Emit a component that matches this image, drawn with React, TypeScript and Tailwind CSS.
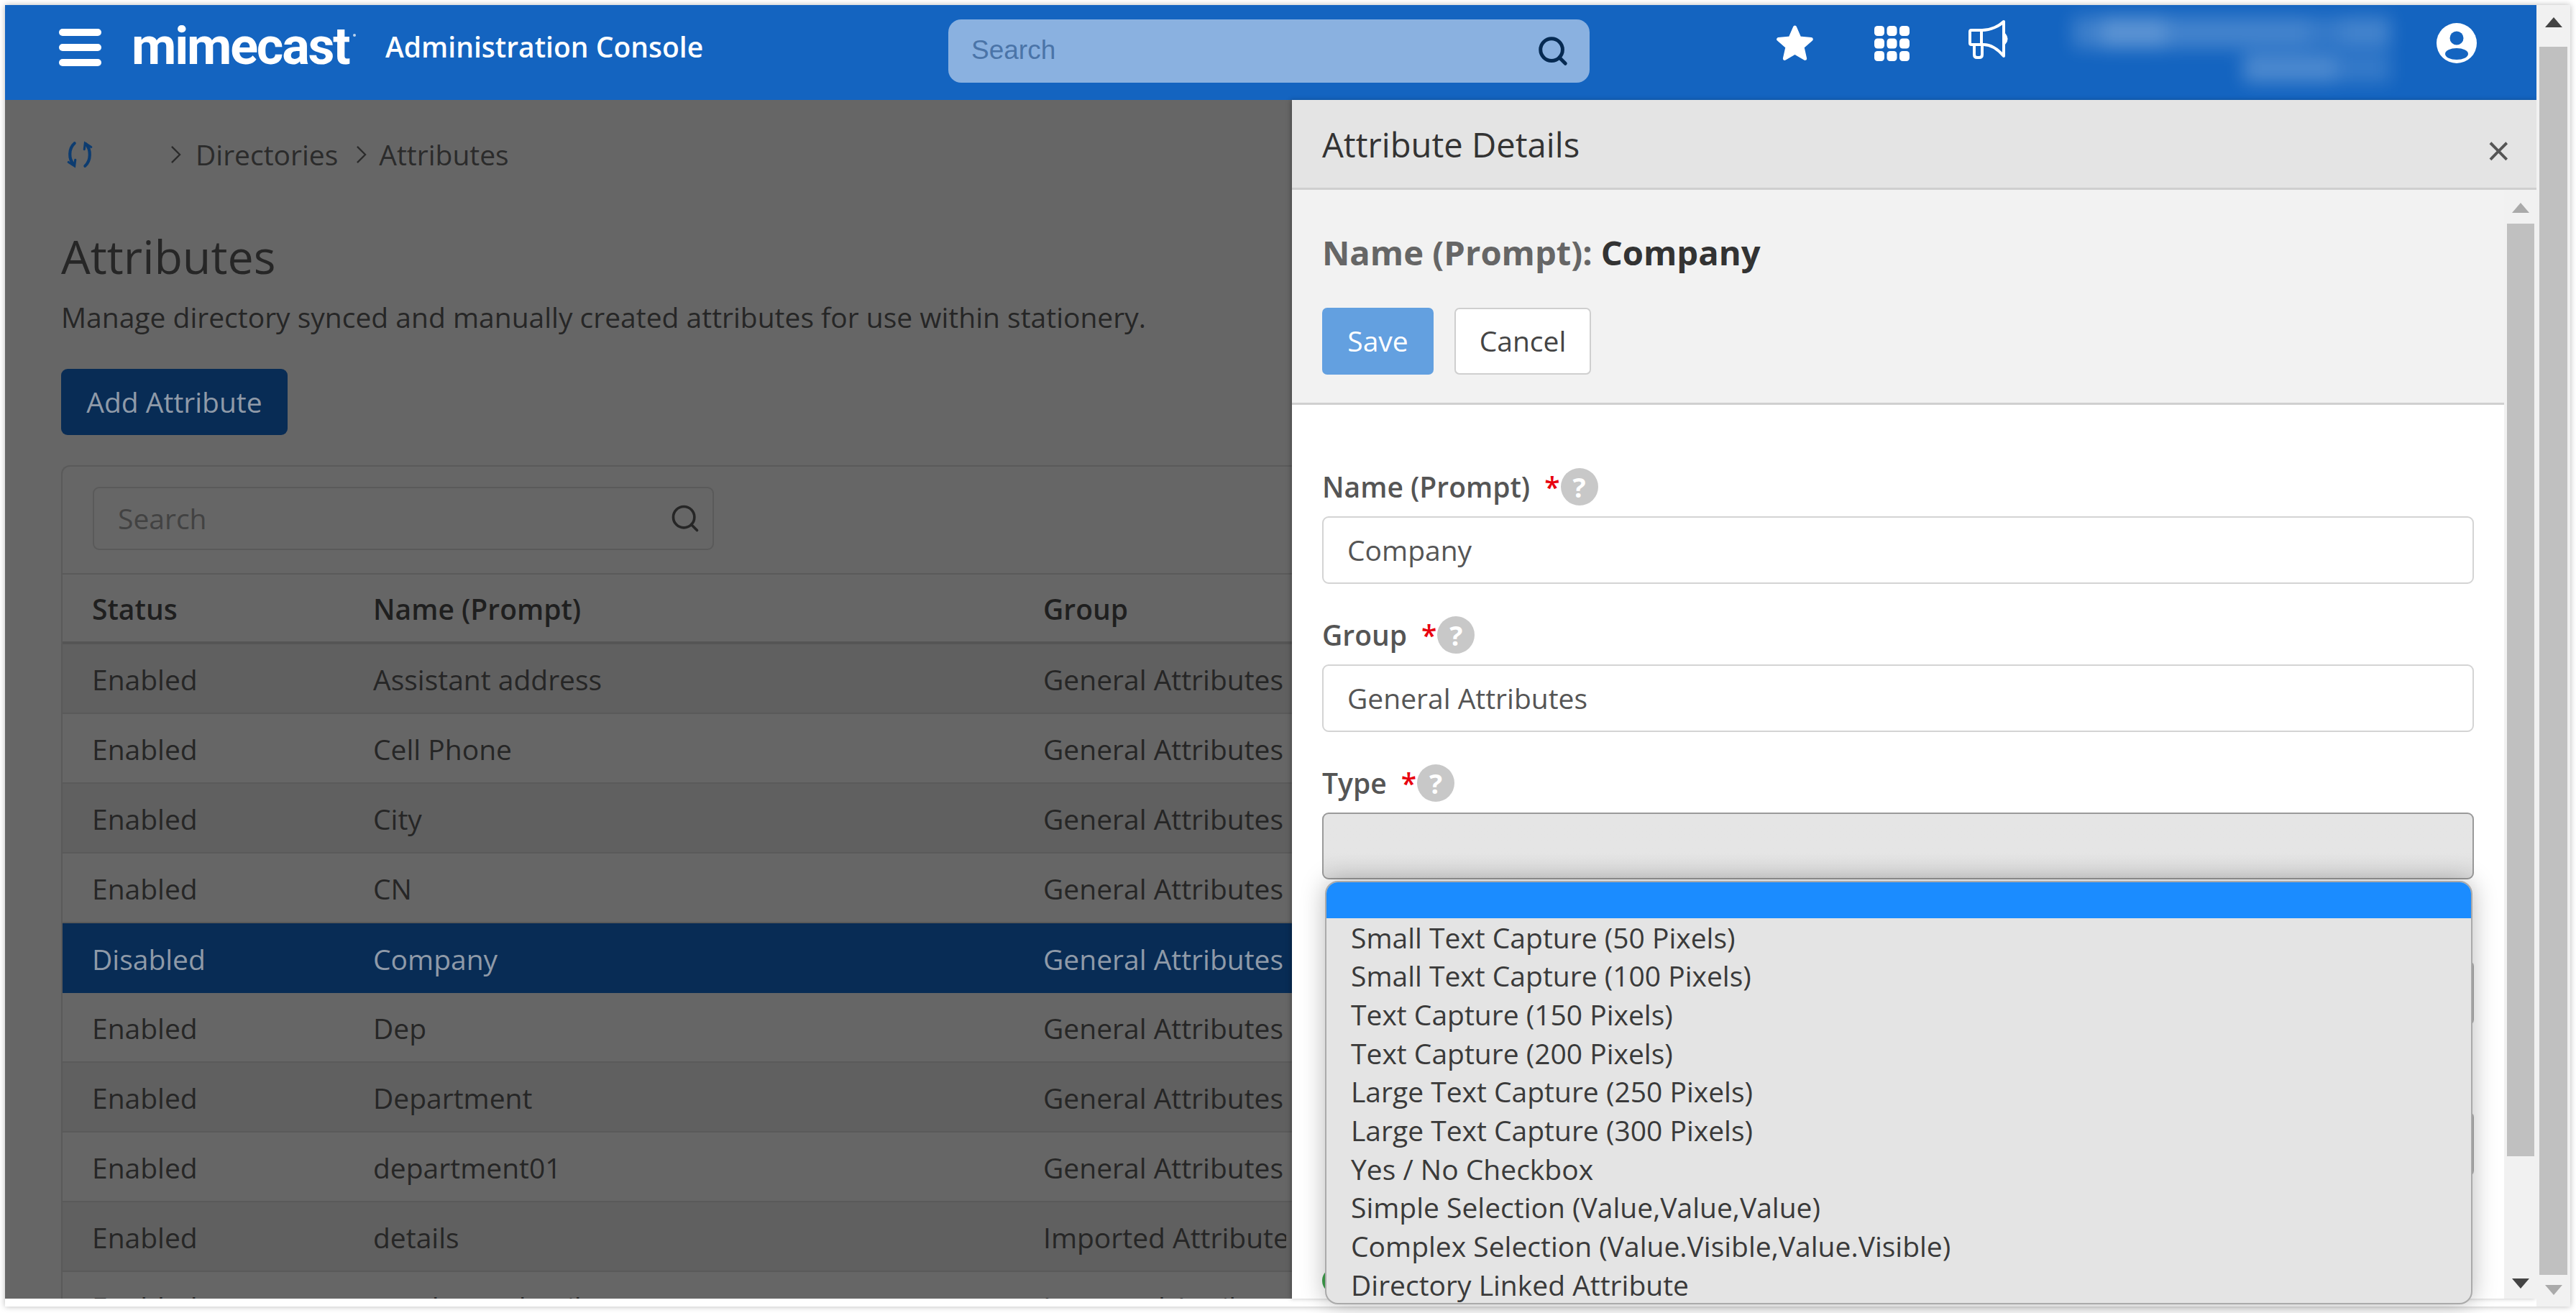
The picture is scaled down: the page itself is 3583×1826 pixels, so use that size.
import { Search } from "lucide-react";

const font = "font-['Open_Sans',sans-serif]";

const rows: [string, string, string, string][] = [
  ["Enabled", "Assistant address", "General Attributes", "bg-[#606060]"],
  ["Enabled", "Cell Phone", "General Attributes", "bg-[#666666]"],
  ["Enabled", "City", "General Attributes", "bg-[#606060]"],
  ["Enabled", "CN", "General Attributes", "bg-[#666666]"],
];
const rowsAfter: [string, string, string, string][] = [
  ["Enabled", "Dep", "General Attributes", "bg-[#666666]"],
  ["Enabled", "Department", "General Attributes", "bg-[#606060]"],
  ["Enabled", "department01", "General Attributes", "bg-[#666666]"],
  ["Enabled", "details", "Imported Attributes", "bg-[#606060]"],
  ["Enabled", "employee details", "Imported Attributes", "bg-[#666666]"],
];

const options = [
  "Small Text Capture (50 Pixels)",
  "Small Text Capture (100 Pixels)",
  "Text Capture (150 Pixels)",
  "Text Capture (200 Pixels)",
  "Large Text Capture (250 Pixels)",
  "Large Text Capture (300 Pixels)",
  "Yes / No Checkbox",
  "Simple Selection (Value,Value,Value)",
  "Complex Selection (Value.Visible,Value.Visible)",
  "Directory Linked Attribute",
];

function Row({ r }: { r: [string, string, string, string] }) {
  return (
    <div className={`flex h-[97px] shrink-0 items-center border-b-2 border-[#5a5a5a] pt-[3px] text-[#262626] ${r[3]}`}>
      <div className="w-[432px] shrink-0 pl-[41px]">{r[0]}</div>
      <div className="w-[932px] shrink-0">{r[1]}</div>
      <div className="w-[338px] shrink-0 overflow-hidden whitespace-nowrap">{r[2]}</div>
    </div>
  );
}

function Help() {
  return (
    <span className="ml-[1px] flex h-[52px] w-[52px] shrink-0 items-center justify-center rounded-full bg-[#c8c8c8] text-[38px] font-bold leading-none text-white">
      ?
    </span>
  );
}

function Field({ label, gap, value, mt }: { label: string; gap: string; value: string; mt: string }) {
  return (
    <div className={mt}>
      <div className="flex h-[50px] items-center text-[#555555] font-semibold">
        <span>{label}</span>
        <span className={`${gap} text-[#e8000f]`}>*</span>
        <Help />
      </div>
      <div className="mt-[16px] flex h-[94px] items-center rounded-[9px] border-2 border-[#d4d4d4] bg-white pl-[33px] text-[#555555]">
        {value}
      </div>
    </div>
  );
}

function Arrow({ up, color }: { up?: boolean; color: string }) {
  return (
    <svg width="24" height="14" viewBox="0 0 24 14" className="shrink-0">
      <polygon points={up ? "12,0 24,14 0,14" : "0,0 24,0 12,14"} fill={color} />
    </svg>
  );
}

export default function App() {
  return (
    <div className={`${font} h-[1826px] w-[3583px] overflow-hidden bg-white pl-[7px] pr-[8px] pt-[7px] text-[39px]`}>
      <div className="relative flex h-[1810px] w-full shadow-[0_0_8px_rgba(0,0,0,0.28)]">
        <div className="flex h-[1799px] w-[3521px] shrink-0 flex-col">
          {/* top bar */}
          <header className="flex h-[132px] shrink-0 items-start bg-[#1464c0] text-white">
            <div className="ml-[75px] mt-[33px] flex h-[52px] w-[59px] shrink-0 flex-col justify-between">
              <span className="h-[10px] rounded-full bg-white" />
              <span className="h-[10px] rounded-full bg-white" />
              <span className="h-[10px] rounded-full bg-white" />
            </div>
            <div className="ml-[42px] mt-[16px] flex w-[353px] shrink-0 items-start font-['Roboto',sans-serif] text-[72px] font-bold leading-[84px] tracking-[-2.2px]">
              mimecast<span className="ml-[6px] mt-[24px] h-[4px] w-[4px] rounded-full bg-white/70" />
            </div>
            <div className="mt-[33px] w-[783px] shrink-0 whitespace-nowrap text-[39px] font-semibold leading-[50px]">Administration Console</div>
            <div className="mt-[20px] flex h-[88px] w-[892px] shrink-0 items-center justify-between rounded-[18px] bg-[#8ab1e0] pl-[32px] pr-[28px] font-['Liberation_Sans',sans-serif] text-[37px] text-[#4a74a8]">
              <span className="mb-[3px]">Search</span>
              <Search size={46} strokeWidth={2.6} className="text-[#062a52]" />
            </div>
            <svg viewBox="0 0 53 50" className="ml-[259px] mt-[28px] h-[50px] w-[53px] shrink-0" fill="#fff" stroke="#fff" strokeWidth="5" strokeLinejoin="round">
              <polygon points="26.5,3 33,18.1 49.3,19.6 37,30.4 40.6,46.4 26.5,38 12.4,46.4 16,30.4 3.7,19.6 20,18.1" />
            </svg>
            <svg viewBox="0 0 49 49" className="ml-[84px] mt-[29px] h-[49px] w-[49px] shrink-0" fill="#fff">
              {[0, 17.5, 35].flatMap((y) => [0, 17.5, 35].map((x) => <rect key={`${x}-${y}`} x={x} y={y} width="14" height="14" rx="4.5" />))}
            </svg>
            <svg viewBox="0 0 56 56" className="ml-[81px] mt-[20px] h-[56px] w-[56px] shrink-0" fill="none" stroke="#fff" strokeWidth="4" strokeLinejoin="round" strokeLinecap="round">
              <path d="M5 15 H20 C32 15 44 9 50 3 V51 C44 44 34 35 22 35 H5 Q3 35 3 33 V17 Q3 15 5 15 Z" />
              <path d="M19 15 V35" />
              <path d="M9 35 V49 Q9 53 13 53 H16 Q20 53 20 49 V36" />
              <path d="M51 21 Q56 27 51 33" />
            </svg>
            <div className="ml-[90px] mt-[16px] flex h-[95px] w-[442px] shrink-0 flex-col items-end gap-[8px] blur-[12px]">
              <div className="flex h-[44px] w-full">
                <span className="w-[40px] bg-white/18" />
                <span className="w-[90px] bg-white/30" />
                <span className="w-[200px] bg-white/20" />
                <span className="flex-1 bg-white/14" />
                <span className="w-[70px] bg-white/20" />
              </div>
              <div className="flex h-[40px] w-[205px]">
                <span className="w-[130px] bg-white/24" />
                <span className="flex-1 bg-white/14" />
              </div>
            </div>
            <svg viewBox="0 0 56 56" className="ml-[64px] mt-[25px] h-[56px] w-[56px] shrink-0">
              <circle cx="28" cy="28" r="28" fill="#fff" />
              <circle cx="28" cy="21" r="9.5" fill="#1464c0" />
              <ellipse cx="28" cy="43" rx="16" ry="8" fill="#1464c0" />
            </svg>
          </header>

          <div className="flex min-h-0 flex-1">
            {/* dimmed page */}
            <main className="min-w-0 flex-1 overflow-hidden bg-[#666666] pl-[78px] text-[#262626]">
              <div className="flex h-[152px] items-center text-[#2b2b2b]">
                <svg viewBox="0 0 40 40" className="ml-[5px] h-[42px] w-[42px] shrink-0" fill="none" stroke="#0d3c70" strokeWidth="4" strokeLinecap="round">
                  <path d="M13 5 C5 12 5 26 12 33" />
                  <path d="M27 35 C35 28 35 13 28 6" />
                  <path d="M5 30 L13 35 L14 27" strokeWidth="3" />
                  <path d="M35 10 L27 5 L26 13" strokeWidth="3" />
                </svg>
                <svg viewBox="0 0 16 28" className="ml-[105px] h-[26px] w-[15px] shrink-0" fill="none" stroke="#2b2b2b" strokeWidth="2.5"><path d="M2 2 L14 14 L2 26" /></svg>
                <span className="ml-[20px]">Directories</span>
                <svg viewBox="0 0 16 28" className="ml-[25px] h-[26px] w-[15px] shrink-0" fill="none" stroke="#2b2b2b" strokeWidth="2.5"><path d="M2 2 L14 14 L2 26" /></svg>
                <span className="ml-[17px]">Attributes</span>
              </div>
              <h1 className="flex h-[130px] items-center text-[64.5px] font-normal">Attributes</h1>
              <p className="flex h-[40px] items-center whitespace-nowrap">Manage directory synced and manually created attributes for use within stationery.</p>
              <div className="mt-[52px] flex h-[92px] w-[315px] items-center justify-center rounded-[9px] bg-[#082c55] text-[#8f9aa8]">
                Add Attribute
              </div>
              <section className="mt-[42px] w-[2000px] rounded-tl-[12px] border-l-2 border-t-2 border-[#5a5a5a]">
                <div className="h-[150px] border-b-2 border-[#5a5a5a] pl-[42px] pt-[28px]">
                  <div className="flex h-[88px] w-[864px] items-center justify-between rounded-[9px] border-2 border-[#5a5a5a] pl-[33px] pr-[16px] text-[#424242]">
                    <span>Search</span>
                    <Search size={44} strokeWidth={2} className="text-[#262626]" />
                  </div>
                </div>
                <div className="flex h-[97px] items-center border-b-4 border-[#555555] pt-[3px] font-semibold text-[#1f1f1f]">
                  <div className="w-[432px] shrink-0 pl-[41px]">Status</div>
                  <div className="w-[932px] shrink-0">Name (Prompt)</div>
                  <div>Group</div>
                </div>
                {rows.map((r) => <Row key={r[1]} r={r} />)}
                <div className="flex h-[97px] items-center bg-[#082c55] pt-[3px] text-[#8f9aa8]">
                  <div className="w-[432px] shrink-0 pl-[41px]">Disabled</div>
                  <div className="w-[932px] shrink-0">Company</div>
                  <div>General Attributes</div>
                </div>
                {rowsAfter.map((r) => <Row key={r[1]} r={r} />)}
              </section>
            </main>

            {/* details panel */}
            <aside className="flex w-[1731px] shrink-0 flex-col bg-white shadow-[-2px_0_6px_rgba(0,0,0,0.25)]">
              <div className="flex h-[125px] shrink-0 justify-between border-b-[3px] border-[#cfcfcf] bg-[#e4e4e4] pl-[42px] pr-[36px] text-[#333333]">
                <h2 className="pt-[32px] text-[47.2px] font-normal leading-[60px]">Attribute Details</h2>
                <span className="pt-[36px] text-[58px] font-normal leading-[68px] text-[#555555]">×</span>
              </div>
              <div className="flex min-h-0 flex-1">
                <div className="min-w-0 flex-1">
                  <div className="h-[299px] border-b-[3px] border-[#d0d0d0] bg-[#f2f2f2] pl-[42px] pt-[57px]">
                    <div className="flex h-[60px] items-center text-[47.2px] font-bold text-[#666666]">
                      Name (Prompt):<span className="ml-[12px] text-[#333333]">Company</span>
                    </div>
                    <div className="mt-[47px] flex gap-[29px]">
                      <div className="flex h-[93px] w-[155px] items-center justify-center rounded-[7px] bg-[#63a0e0] text-white">Save</div>
                      <div className="flex h-[93px] w-[190px] items-center justify-center rounded-[7px] border-2 border-[#cfcfcf] bg-white text-[#444444]">Cancel</div>
                    </div>
                  </div>
                  <div className="relative w-[1644px] pl-[42px]">
                    <Field label="Name (Prompt)" gap="ml-[20px]" value="Company" mt="mt-[89px]" />
                    <Field label="Group" gap="ml-[20px]" value="General Attributes" mt="mt-[46px]" />
                    <div className="mt-[46px]">
                      <div className="flex h-[50px] items-center font-semibold text-[#555555]">
                        <span>Type</span>
                        <span className="ml-[20px] text-[#e8000f]">*</span>
                        <Help />
                      </div>
                      <div className="relative mt-[16px] h-[93px] rounded-[9px] border-2 border-[#9a9a9a] bg-gradient-to-b from-[#e5e5e5] from-60% to-[#dcdcdc]">
                        <div className="absolute left-[2px] right-[0px] top-[93px] z-10 h-[589px] overflow-hidden rounded-[18px] border-2 border-[#aaaaaa] bg-[#e4e4e4] text-[#3a3a3a] shadow-[0_0_34px_rgba(0,0,0,0.28)]">
                          <div className="h-[50px] bg-[#1b8cff]" />
                          {options.map((o) => (
                            <div key={o} className="flex h-[53.7px] items-center whitespace-nowrap pl-[34px]">{o}</div>
                          ))}
                        </div>
                      </div>
                    </div>
                    <div className="ml-[12px] mt-[112px] h-[92px] rounded-[9px] border-2 border-[#b0b0b0] bg-white" />
                    <div className="ml-[12px] mt-[118px] h-[92px] rounded-[9px] border-2 border-[#b0b0b0] bg-white" />
                    <div className="mt-[126px] h-[36px] w-[60px] rounded-l-[18px] bg-[#3fa34d]" />
                  </div>
                </div>
                <div className="flex w-[45px] shrink-0 flex-col items-center bg-[#f1f1f1] pt-[18px]">
                  <Arrow up color="#aaaaaa" />
                  <div className="mt-[15px] h-[1297px] w-[38px] bg-[#c0c0c0]" />
                  <div className="mt-[170px]"><Arrow color="#444444" /></div>
                </div>
              </div>
            </aside>
          </div>
        </div>

        {/* window scrollbar */}
        <div className="flex h-full flex-1 flex-col items-center bg-[#f1f1f1] pt-[17px]">
          <Arrow up color="#444444" />
          <div className="mt-[27px] h-[1708px] w-[39px] bg-[#c0c0c0]" />
          <div className="mt-[14px]"><Arrow color="#aaaaaa" /></div>
        </div>
      </div>
    </div>
  );
}
